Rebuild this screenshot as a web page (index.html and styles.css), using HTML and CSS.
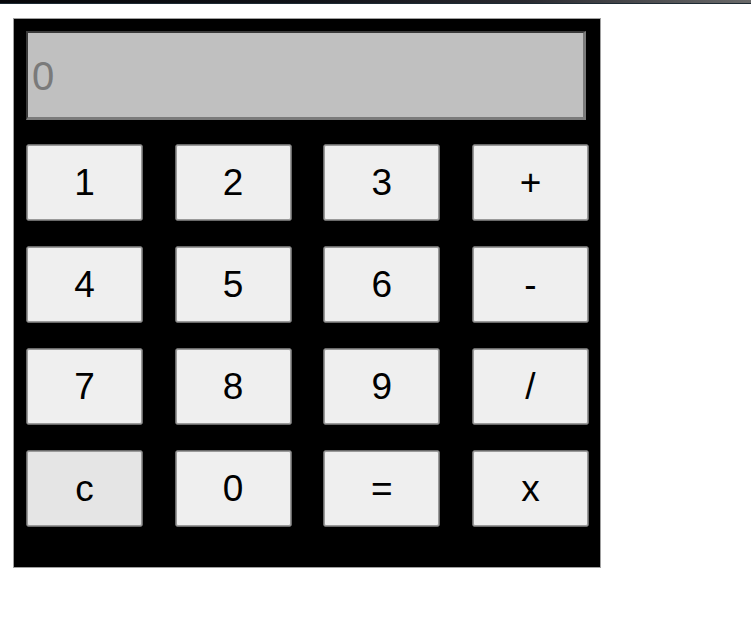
FILE: index.html
```html
<!DOCTYPE html>
<html>
<head>
<meta charset="utf-8">
<link rel="stylesheet" href="styles.css">
</head>
<body>
<div class="topbar"></div>
<div class="calc">
  <div class="display">0</div>
  <div class="keys">
    <button class="key">1</button>
    <button class="key">2</button>
    <button class="key">3</button>
    <button class="key">+</button>
    <button class="key">4</button>
    <button class="key">5</button>
    <button class="key">6</button>
    <button class="key">-</button>
    <button class="key">7</button>
    <button class="key">8</button>
    <button class="key">9</button>
    <button class="key">/</button>
    <button class="key key-hover">c</button>
    <button class="key">0</button>
    <button class="key">=</button>
    <button class="key">x</button>
  </div>
</div>
</body>
</html>
```
FILE: styles.css
```css
html, body {
  margin: 0;
  padding: 0;
  background: #ffffff;
}
.topbar {
  height: 4px;
  background: linear-gradient(to right, #06070a 0%, #101218 40%, #2a2a30 70%, #6a6a6a 100%);
  border-bottom: 1px solid #1d2a33;
  box-sizing: border-box;
}
.calc {
  margin: 14px 0 0 13px;
  border: 1px solid #a0a0a0;
  background: #000;
  padding: 12px 11px 40px 12px;
  box-sizing: border-box;
  width: 588px;
}
.display {
  box-sizing: border-box;
  width: 560px;
  height: 89px;
  background: #c0c0c0;
  border-style: solid;
  border-width: 2px 3px 3px 2px;
  border-color: #3a3a3a #7b7b7b #7b7b7b #3a3a3a;
  color: #7a7a7a;
  font-family: "Liberation Sans", Arial, sans-serif;
  font-size: 40px;
  line-height: 86px;
  padding-left: 4px;
}
.keys {
  margin-top: 24px;
  display: grid;
  grid-template-columns: repeat(4, 117px);
  grid-auto-rows: 77px;
  justify-content: space-between;
  row-gap: 25px;
}
.key {
  margin: 0;
  padding: 0 0 1px 0;
  background: #efefef;
  border: 1px solid #6a6a6a;
  box-shadow: inset 0 0 0 1px #9a9a9a;
  border-radius: 3px;
  color: #000;
  font-family: "Liberation Sans", Arial, sans-serif;
  font-size: 37px;
  padding-top: 2px;
}
.key-hover {
  background: #e5e5e5;
}
```
